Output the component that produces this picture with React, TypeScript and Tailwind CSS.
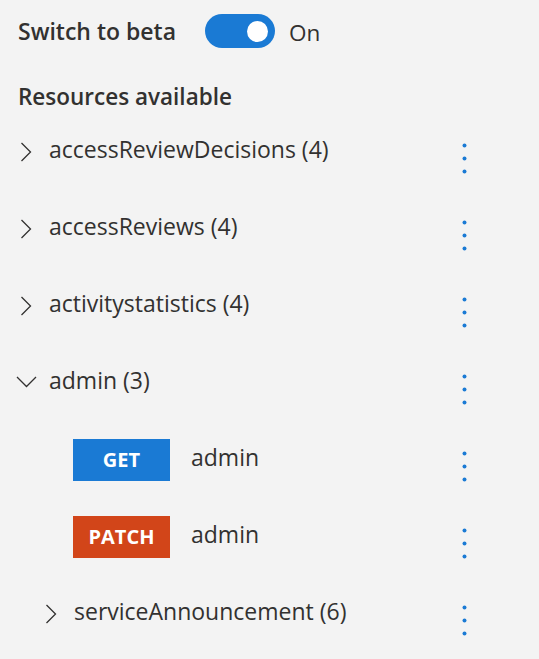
import React from 'react';

type Row = { label: string; level: number; open?: boolean; method?: 'GET' | 'PATCH' };

const ROWS: Row[] = [
  { label: 'accessReviewDecisions (4)', level: 0 },
  { label: 'accessReviews (4)', level: 0 },
  { label: 'activitystatistics (4)', level: 0 },
  { label: 'admin (3)', level: 0, open: true },
  { label: 'admin', level: 1, method: 'GET' },
  { label: 'admin', level: 1, method: 'PATCH' },
  { label: 'serviceAnnouncement (6)', level: 2 },
];

function ChevronRight() {
  return (
    <svg width="12" height="20" viewBox="0 0 12 20" fill="none">
      <path d="M1.5 1L10.5 10L1.5 19" stroke="#323130" strokeWidth="1.3" />
    </svg>
  );
}

function ChevronDown() {
  return (
    <svg width="21" height="12" viewBox="0 0 21 12" fill="none">
      <path d="M1 1L10.5 10.5L20 1" stroke="#323130" strokeWidth="1.3" />
    </svg>
  );
}

function MoreDots() {
  return (
    <svg width="5" height="31" viewBox="0 0 5 31" className="mt-[32px] shrink-0">
      <circle cx="2.5" cy="2.5" r="2" fill="#1a7ad4" />
      <circle cx="2.5" cy="15.5" r="2" fill="#1a7ad4" />
      <circle cx="2.5" cy="28.5" r="2" fill="#1a7ad4" />
    </svg>
  );
}

export default function App() {
  return (
    <div
      className="w-[539px] h-[659px] bg-[#f3f3f3] text-[#323130] overflow-hidden pt-[14px]"
      style={{ fontFamily: '"Open Sans", "Noto Sans", sans-serif' }}
    >
      {/* beta toggle */}
      <div className="flex items-center h-[34px] pl-[18px]">
        <span className="text-[23px] font-semibold w-[187px]">Switch to beta</span>
        <div className="w-[70px] h-[34px] rounded-full bg-[#1a7ad4] flex items-center justify-end pr-[7px]">
          <div className="w-[21px] h-[21px] rounded-full bg-white" />
        </div>
        <span className="text-[22.5px] ml-[14px] mt-[3px]">On</span>
      </div>

      <div className="pl-[18px] mt-[35px] h-[28px] text-[22.5px] leading-[28px] font-semibold">
        Resources available
      </div>

      <div className="w-[539px]">
        {ROWS.map((row, i) => (
          <div key={i} className="flex h-[77px] items-start">
            <div className="flex items-center h-[77px] w-[462px]">
              {row.level === 0 && (
                <>
                  <div className="w-[49px] flex justify-start">
                    {row.open ? (
                      <div className="ml-[16px] mt-[2px]">
                        <ChevronDown />
                      </div>
                    ) : (
                      <div className="ml-[20px] mt-[4px]">
                        <ChevronRight />
                      </div>
                    )}
                  </div>
                  <span className="text-[23px] leading-[28px] -mt-[2px]">{row.label}</span>
                </>
              )}
              {row.level === 1 && (
                <>
                  <div
                    className={`ml-[73px] w-[97px] h-[42px] mt-[5px] flex items-center justify-center text-white text-[20px] font-bold ${
                      row.method === 'GET' ? 'bg-[#1a7ad4]' : 'bg-[#d24519]'
                    }`}
                  >
                    {row.method}
                  </div>
                  <span className="ml-[21px] text-[23px] leading-[28px] -mt-[2px]">{row.label}</span>
                </>
              )}
              {row.level === 2 && (
                <>
                  <div className="w-[74px]">
                    <div className="ml-[45px] mt-[4px]">
                      <ChevronRight />
                    </div>
                  </div>
                  <span className="text-[23px] leading-[28px] -mt-[2px]">{row.label}</span>
                </>
              )}
            </div>
            <MoreDots />
          </div>
        ))}
      </div>
    </div>
  );
}
